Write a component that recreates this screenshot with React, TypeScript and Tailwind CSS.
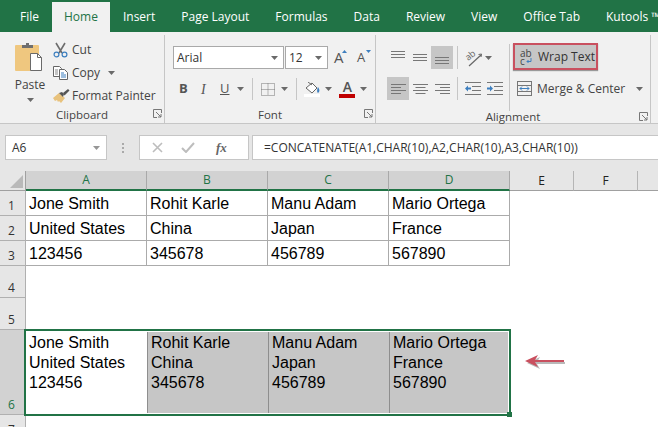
import type { ReactNode } from 'react'

const tabs = ['File', 'Home', 'Insert', 'Page Layout', 'Formulas', 'Data', 'Review', 'View', 'Office Tab', 'Kutools ™']

const people = [
  ['Jone Smith', 'United States', '123456'],
  ['Rohit Karle', 'China', '345678'],
  ['Manu Adam', 'Japan', '456789'],
  ['Mario Ortega', 'France', '567890'],
]

function Caret({ className = '' }: { className?: string }) {
  return (
    <svg width="7" height="4" viewBox="0 0 7 4" className={`shrink-0 ${className}`}>
      <path d="M0 0h7L3.5 4z" fill="#6a6a6a" />
    </svg>
  )
}

function Launcher() {
  return (
    <svg width="9" height="9" viewBox="0 0 9 9" className="absolute right-[2px] top-[2px]" fill="none" stroke="#777">
      <path d="M8.5 4V.5H.5v8H4" />
      <path d="M3 3l5 5M8 5v3H5" />
    </svg>
  )
}

// rows of grey bars for the align buttons, widths given per bar
function Lines({ bars, gap = 3, w = 15, align = 'left' }: { bars: number[]; gap?: number; w?: number; align?: 'left' | 'center' | 'right' }) {
  return (
    <svg width={w} height={(bars.length - 1) * gap + 1} className="shrink-0">
      {bars.map((b, i) => {
        const x = align === 'left' ? 0 : align === 'right' ? w - b : (w - b) / 2
        return <rect key={i} x={x} y={i * gap} width={b} height="1" fill="#777" />
      })}
    </svg>
  )
}

function Group({ width, label, children }: { width: string; label: string; children: ReactNode }) {
  return (
    <div className={`relative flex h-full shrink-0 flex-col border-r border-[#c6c6c6] ${width}`}>
      <div className="h-[75px]">{children}</div>
      <div className="relative flex h-[17px] items-center justify-center text-[11.5px] leading-none text-[#444]">
        {label}
        <Launcher />
      </div>
    </div>
  )
}

function PasteIcon() {
  return (
    <svg width="30" height="32" viewBox="0 0 30 32">
      <rect x="0" y="3" width="24" height="26" rx="1" fill="#efc77f" />
      <path d="M7 6V3h4V1h3v2h4v3z" fill="#6f6f6f" />
      <path d="M15.5 11.5h7l4 4v13h-11z" fill="#fff" stroke="#6a6a6a" />
      <path d="M22.5 11.5v4h4" fill="none" stroke="#6a6a6a" />
    </svg>
  )
}

function CutIcon() {
  return (
    <svg width="15" height="16" viewBox="0 0 15 16" fill="none">
      <path d="M3 1l6 10M12 1L6 11" stroke="#6d6d6d" strokeWidth="1.6" />
      <circle cx="3.5" cy="12.5" r="2.4" stroke="#3d7fbf" strokeWidth="1.2" />
      <circle cx="11.5" cy="12.5" r="2.4" stroke="#3d7fbf" strokeWidth="1.2" />
    </svg>
  )
}

function CopyIcon() {
  return (
    <svg width="15" height="14" viewBox="0 0 15 14" fill="none">
      <path d="M.5.5h6l2 2v8h-8z" fill="#fff" stroke="#666" />
      <path d="M6.5 3.5h5l3 3v7h-8z" fill="#fff" stroke="#666" />
      <path d="M8 7h3M8 9h5M8 11h5" stroke="#3d7fbf" />
      <path d="M2 4h3M2 6h3M2 8h3" stroke="#888" />
    </svg>
  )
}

function PainterIcon() {
  return (
    <svg width="17" height="15" viewBox="0 0 17 15">
      <path d="M0 10l6-5 6 5-4 5-2-2-1 1-1-2-2 1z" fill="#e8c27d" />
      <path d="M6 5l3-1 2 2-1 3z" fill="#555" />
      <path d="M10 5l5-4 1.5 1.5-5 5z" fill="#555" />
    </svg>
  )
}

function ClipboardGroup() {
  return (
    <Group width="w-[165px]" label="Clipboard">
      <div className="flex h-full">
        <div className="ml-[16px] flex w-[28px] flex-col items-center pt-[7px]">
          <PasteIcon />
          <span className="mt-[2px] text-[12px] leading-[17px] text-[#444]">Paste</span>
          <Caret className="mt-[5px]" />
        </div>
        <div className="ml-[9px] flex flex-col pt-[3px] text-[12px] leading-[23px] text-[#444]">
          <div className="flex h-[23px] items-center">
            <span className="flex w-[19px]"><CutIcon /></span>Cut
          </div>
          <div className="flex h-[23px] items-center">
            <span className="flex w-[19px]"><CopyIcon /></span>Copy
            <Caret className="ml-[8px]" />
          </div>
          <div className="flex h-[23px] items-center">
            <span className="flex w-[19px]"><PainterIcon /></span>Format Painter
          </div>
        </div>
      </div>
    </Group>
  )
}

function FontBox({ text, width }: { text: string; width: string }) {
  return (
    <div className={`flex h-[23px] items-center justify-between border border-[#a9a9a9] bg-white pl-[3px] pr-[5px] text-[12px] text-[#333] ${width}`}>
      {text}
      <Caret />
    </div>
  )
}

function FontGroup() {
  return (
    <Group width="w-[211px]" label="Font">
      <div className="flex items-center pl-[8px] pt-[11px]">
        <FontBox text="Arial" width="w-[111px]" />
        <FontBox text="12" width="ml-[1px] w-[43px]" />
        <div className="relative ml-[6px] w-[12px] text-[15px] leading-none text-[#555]">
          A
          <svg width="5" height="3" className="absolute -right-[1px] top-0"><path d="M0 3L2.5 0 5 3z" fill="#3d7fbf" /></svg>
        </div>
        <div className="relative ml-[11px] w-[12px] text-[13px] leading-none text-[#555]">
          A
          <svg width="5" height="3" className="absolute -right-[2px] -top-[1px]"><path d="M0 0h5L2.5 3z" fill="#3d7fbf" /></svg>
        </div>
      </div>
      <div className="mt-[8px] flex h-[24px] items-center pl-[14px] text-[#555]">
        <span className="w-[22px] text-[13px] font-bold">B</span>
        <span className="w-[19px] font-['Liberation_Serif',serif] text-[14px] italic">I</span>
        <span className="text-[13px] underline">U</span>
        <Caret className="ml-[8px]" />
        <div className="ml-[8px] h-[22px] w-px bg-[#c6c6c6]" />
        <svg width="14" height="13" className="ml-[8px]" fill="none" stroke="#777" strokeDasharray="1 1">
          <path d="M.5 .5h13v12H.5zM7 .5v12M.5 6.5h13" />
        </svg>
        <Caret className="ml-[6px]" />
        <div className="ml-[8px] h-[22px] w-px bg-[#c6c6c6]" />
        <div className="ml-[7px] flex w-[16px] flex-col items-center">
          <svg width="16" height="12" viewBox="0 0 16 12">
            <path d="M2 6l6-5 5 5-5 5z" fill="#fff" stroke="#666" />
            <path d="M4 0l4 3" stroke="#666" />
            <path d="M14 5c1 2 2 3 1 5s-3 0-1-5z" fill="#3d7fbf" />
          </svg>
          <div className="h-[3px] w-[16px] bg-white" />
        </div>
        <Caret className="ml-[5px]" />
        <div className="ml-[7px] flex w-[16px] flex-col items-center">
          <span className="text-[14px] font-semibold leading-[12px] text-[#555]">A</span>
          <div className="mt-[1px] h-[4px] w-[16px] bg-[#c00000]" />
        </div>
        <Caret className="ml-[5px]" />
      </div>
    </Group>
  )
}

function WrapIcon() {
  return (
    <span className="flex w-[14px] flex-col text-[10px] font-medium leading-[8px] text-[#444]">
      <span>ab</span>
      <span className="flex items-center">
        c
        <svg width="6" height="6" className="ml-[1px]" fill="none" stroke="#3d7fbf"><path d="M5 0v3.500H1M2.500 2L1 3.500 2.500 5" /></svg>
      </span>
    </span>
  )
}

function AlignmentGroup() {
  const cell = 'flex h-[23px] w-[22px] items-center justify-center'
  return (
    <Group width="w-[275px]" label="Alignment">
      <div className="flex h-full">
        <div className="w-[133px] pl-[11px] pt-[11px]">
          <div className="flex items-start">
            <div className={`${cell} items-start pt-[5px]`}><Lines bars={[14, 14, 14]} gap={3} w={14} /></div>
            <div className={cell}><Lines bars={[14, 14, 14]} gap={3} w={14} /></div>
            <div className={`${cell} items-end bg-[#c6c6c6] pb-[5px]`}><Lines bars={[14, 14, 14]} gap={3} w={14} /></div>
            <div className="ml-[4px] h-[23px] w-px bg-[#c6c6c6]" />
            <svg width="18" height="18" viewBox="0 0 18 18" className="ml-[7px] mt-[3px]" fill="none">
              <path d="M4 17L16 6" stroke="#666" strokeWidth="1.2" />
              <path d="M13.500 5.500L16.500 5l-.5 3" stroke="#666" />
              <text x="1" y="10" fontSize="9" fontFamily="Open Sans, sans-serif" fill="#666" transform="rotate(-40 5 8)">ab</text>
            </svg>
            <Caret className="ml-[2px] mt-[10px]" />
          </div>
          <div className="mt-[8px] flex items-center">
            <div className={`${cell} bg-[#c6c6c6]`}><Lines bars={[15, 10, 15, 10]} /></div>
            <div className={cell}><Lines bars={[15, 10, 15, 10]} align="center" /></div>
            <div className={cell}><Lines bars={[15, 10, 15, 10]} align="right" /></div>
            <div className="ml-[4px] h-[23px] w-px bg-[#c6c6c6]" />
            <svg width="16" height="13" className="ml-[7px]">
              <path d="M0 .5h16M7 4.500h9M7 8.500h9M0 12.500h16" stroke="#777" />
              <path d="M0 6.500l3-3v2h3v2H3v2z" fill="#3d7fbf" />
            </svg>
            <svg width="16" height="13" className="ml-[6px]">
              <path d="M0 .5h16M7 4.500h9M7 8.500h9M0 12.500h16" stroke="#777" />
              <path d="M6 6.500l-3-3v2H0v2h3v2z" fill="#3d7fbf" />
            </svg>
          </div>
        </div>
        <div className="w-px self-start mt-[9px] h-[67px] bg-[#c6c6c6]" />
        <div className="pl-[3px] pt-[8px]">
          <div className="flex h-[27px] w-[85px] items-center border-2 border-[#c9505f] bg-[#c6c6c6] pl-[5px] text-[12px] text-[#333] shadow-[0_1px_1px_#999]">
            <WrapIcon />
            <span className="ml-[4px]">Wrap Text</span>
          </div>
          <div className="mt-[7px] flex h-[23px] items-center pl-[4px] text-[12px] text-[#444]">
            <svg width="15" height="15" fill="none">
              <rect x=".5" y=".5" width="14" height="14" stroke="#777" />
              <path d="M.5 4.500h14M.5 10.500h14" stroke="#777" />
              <path d="M3 7.500h9M5 5.500l-2 2 2 2M10 5.500l2 2-2 2" stroke="#3d7fbf" />
            </svg>
            <span className="ml-[5px]">Merge &amp; Center</span>
            <Caret className="ml-[11px]" />
          </div>
        </div>
      </div>
    </Group>
  )
}

function FormulaBar() {
  return (
    <div className="flex h-[47px] items-start bg-[#e6e6e6] pl-[5px] pt-[11px] text-[12px]">
      <div className="flex h-[25px] w-[102px] items-center justify-between border border-[#c6c6c6] bg-white pl-[6px] pr-[6px] text-[#333]">
        A6
        <Caret className="opacity-70" />
      </div>
      <div className="ml-[15px] mt-[8px] flex h-[10px] w-[3px] flex-col justify-between">
        <div className="h-[2px] w-[2px] bg-[#aaa]" />
        <div className="h-[2px] w-[2px] bg-[#aaa]" />
        <div className="h-[2px] w-[2px] bg-[#aaa]" />
      </div>
      <div className="ml-[14px] flex h-[25px] w-[110px] items-center border border-[#c6c6c6] bg-white pl-[12px]">
        <svg width="11" height="11" fill="none" stroke="#bdbdbd" strokeWidth="1.6"><path d="M1 1l9 9M10 1l-9 9" /></svg>
        <svg width="14" height="11" className="ml-[18px]" fill="none" stroke="#bdbdbd" strokeWidth="2"><path d="M1 6l4 4 8-9" /></svg>
        <span className="ml-[21px] font-['Liberation_Serif',serif] text-[13px] font-bold italic text-[#666]">fx</span>
      </div>
      <div className="ml-[3px] flex h-[25px] flex-1 items-center border border-r-0 border-[#c6c6c6] bg-white pl-[11px] text-[12px] text-[#333]">
        =CONCATENATE(A1,CHAR(10),A2,CHAR(10),A3,CHAR(10))
      </div>
    </div>
  )
}

function ColHead({ label, active }: { label: string; active?: boolean }) {
  return (
    <div
      className={`flex items-center justify-center border-r text-[12px] ${
        active
          ? 'border-[#a9a9a9] border-b-2 border-b-[#217346] bg-[#d2d2d2] text-[#217346]'
          : 'border-[#b5b5b5] border-b border-b-[#a0a0a0] bg-[#e6e6e6] text-[#222]'
      }`}
    >
      {label}
    </div>
  )
}

function RowHead({ label, active }: { label: string; active?: boolean }) {
  return (
    <div
      className={`flex items-end justify-center border-b border-r border-[#b0b0b0] pr-[2px] text-[12px] leading-[18px] ${
        active ? 'bg-[#d2d2d2] text-[#217346]' : 'bg-[#e6e6e6] text-[#333]'
      }`}
    >
      {label}
    </div>
  )
}

function Sheet() {
  return (
    <div className="relative grid grid-cols-[26px_121px_121px_121px_121px_64px_64px_1fr] grid-rows-[20px_25px_25px_25px_32px_32px_85px_25px] bg-white">
      <div className="flex items-end justify-end border-b border-r border-[#a0a0a0] bg-[#e6e6e6] pb-[2px] pr-[2px]">
        <svg width="13" height="13"><path d="M13 0v13H0z" fill="#b9b9b9" /></svg>
      </div>
      {['A', 'B', 'C', 'D'].map((c) => (
        <ColHead key={c} label={c} active />
      ))}
      <ColHead label="E" />
      <ColHead label="F" />
      <div className="border-b border-b-[#a0a0a0] bg-[#e6e6e6]" />

      {[0, 1, 2].map((row) => (
        <div key={row} className="contents">
          <RowHead label={String(row + 1)} />
          {people.map((p) => (
            <div key={p[0]} className="flex items-end border-b border-r border-[#ababab] pb-[1px] pl-[3px] font-['Liberation_Sans',sans-serif] text-[16px] leading-[20px] text-black">
              {p[row]}
            </div>
          ))}
          <div className="col-span-3" />
        </div>
      ))}

      <RowHead label="4" />
      <div className="col-span-7" />
      <RowHead label="5" />
      <div className="col-span-7" />

      <RowHead label="6" active />
      {people.map((p, i) => (
        <div
          key={p[0]}
          className={`pl-[3px] pt-[3px] font-['Liberation_Sans',sans-serif] text-[16px] leading-[20px] text-black ${
            i === 0 ? 'bg-white' : 'border-l border-[#8e8e8e] bg-[#c6c6c6]'
          }`}
        >
          {p.map((line) => (
            <div key={line}>{line}</div>
          ))}
        </div>
      ))}
      <div className="col-span-3" />

      <RowHead label="7" />
      <div className="col-span-7" />

      {/* selection box sits over cells A6:D6 */}
      <div className="pointer-events-none absolute left-[24px] top-[158px] h-[87px] w-[487px] border-2 border-[#217346] shadow-[inset_0_0_0_1px_#fff]">
        <div className="absolute -bottom-[3px] -right-[3px] h-[5px] w-[5px] bg-[#217346]" />
      </div>
      <svg width="42" height="18" viewBox="0 0 42 18" className="absolute left-[524px] top-[182px]">
        <path d="M2 9l13-6-3 5h28v2H12l3 5z" fill="#b9b9b9" transform="translate(1 1)" />
        <path d="M1 8l13-6-3 5h29v2H11l3 5z" fill="#c9505f" />
      </svg>
    </div>
  )
}

export default function App() {
  return (
    <div className="h-[427px] w-[658px] overflow-hidden bg-white font-['Open_Sans',sans-serif]">
      <div className="flex h-[32px] items-end bg-[#217346] pl-[7px] text-[12px] text-white">
        {tabs.map((t) => (
          <div
            key={t}
            className={`flex h-[30px] items-center whitespace-nowrap ${
              t === 'Home' ? 'bg-[#f1f1f1] px-[12px] text-[#217346]' : 'px-[13px]'
            }`}
          >
            {t}
          </div>
        ))}
      </div>
      <div className="flex h-[92px] border-b border-[#c6c6c6] bg-[#f1f1f1] pt-[3px]">
        <ClipboardGroup />
        <FontGroup />
        <AlignmentGroup />
      </div>
      <FormulaBar />
      <Sheet />
    </div>
  )
}
